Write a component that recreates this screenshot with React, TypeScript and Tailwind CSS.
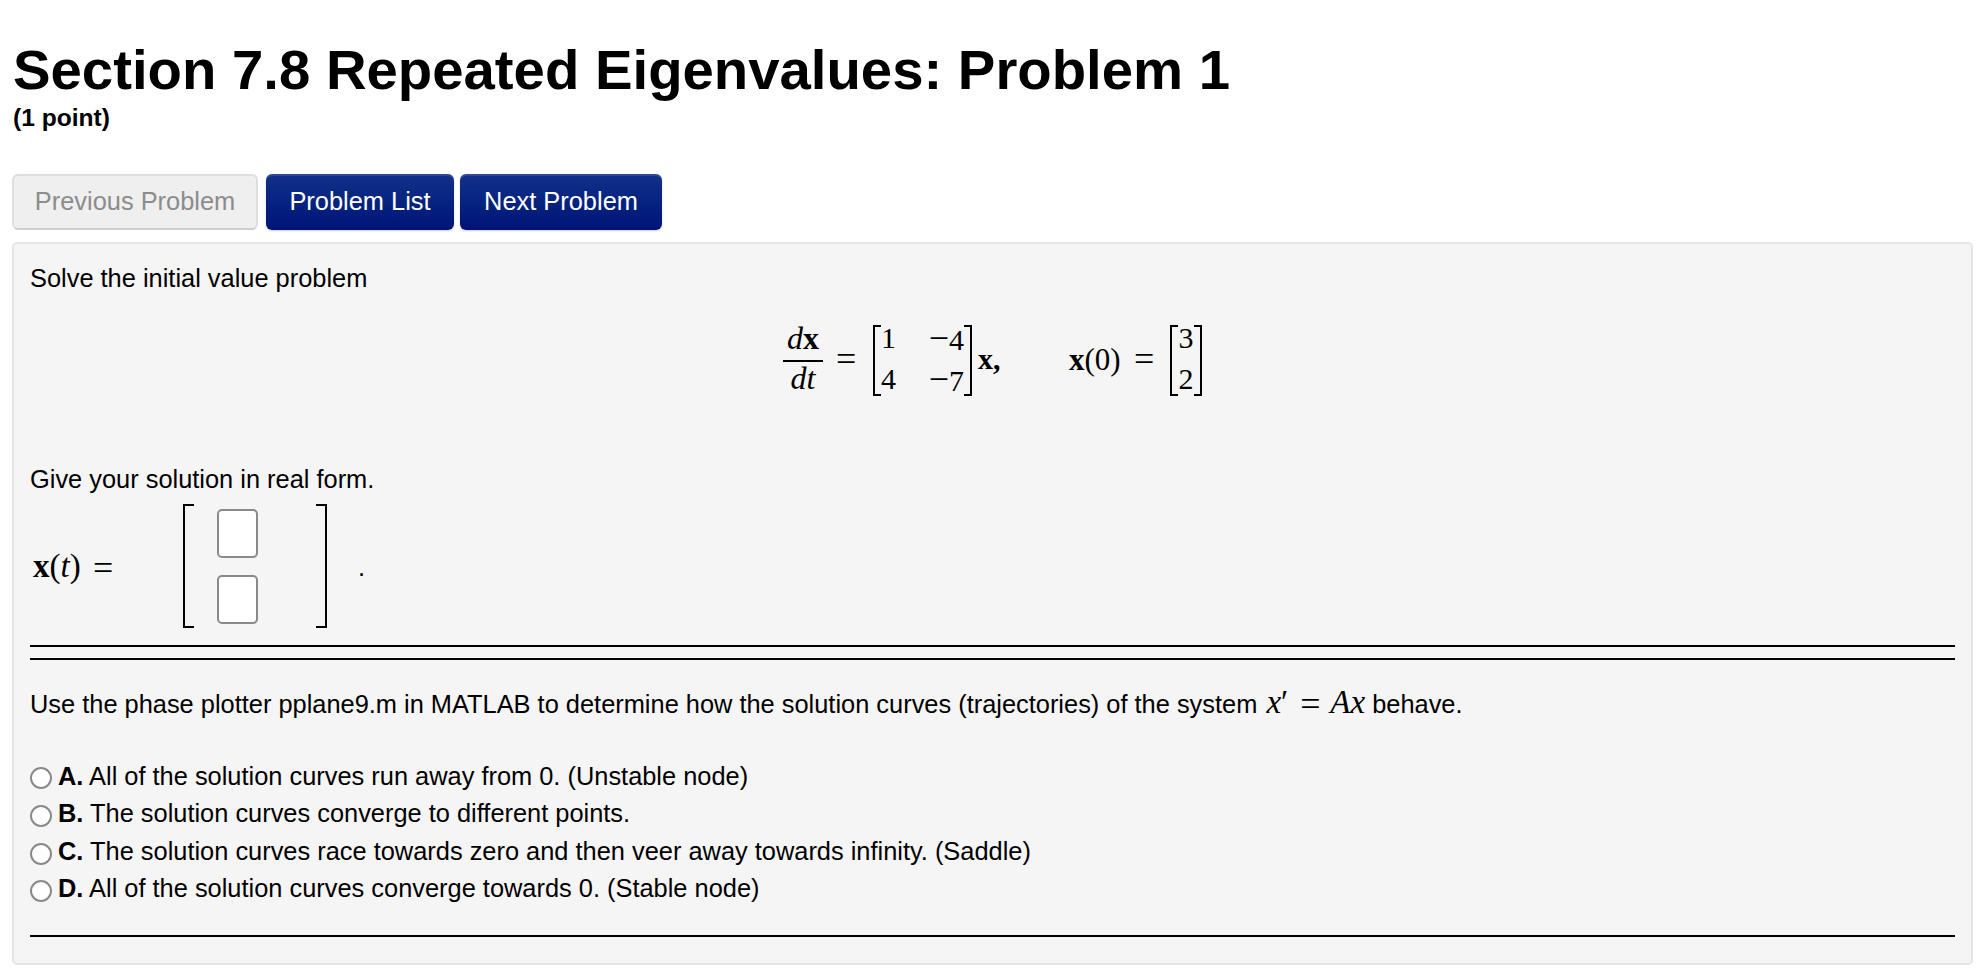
const options = [
  { key: 'A.', text: 'All of the solution curves run away from 0. (Unstable node)', row: 'h-[36px]', radio: 'mt-[3px]' },
  { key: 'B.', text: 'The solution curves converge to different points.', row: 'h-[38px]', radio: 'mt-[5px]' },
  { key: 'C.', text: 'The solution curves race towards zero and then veer away towards infinity. (Saddle)', row: 'h-[38px]', radio: 'mt-[6px]' },
  { key: 'D.', text: 'All of the solution curves converge towards 0. (Stable node)', row: 'h-[36px]', radio: 'mt-[5px]' },
];

function Bracket({ side, className }: { side: 'left' | 'right'; className: string }) {
  return (
    <div
      className={`shrink-0 border-y-2 border-black ${side === 'left' ? 'border-l-2' : 'border-r-2'} ${className}`}
    />
  );
}

function Equals({ className }: { className: string }) {
  return <span className={`inline-block w-[20px] text-center text-[36px] leading-none ${className}`}>=</span>;
}

function Negative({ digit }: { digit: string }) {
  return (
    <span className="whitespace-nowrap text-right">
      <span className="text-[36px]">−</span>
      {digit}
    </span>
  );
}

function Equation() {
  return (
    <div className="mt-[29px] flex h-[71px] items-center justify-center font-['Liberation_Serif',serif] text-[30px] leading-none text-black">
      <div className="flex h-[71px] w-[40px] flex-col items-center text-[32px] leading-[26px]">
        <div className="h-[35px] whitespace-nowrap">
          <i>d</i>
          <b>x</b>
        </div>
        <div className="h-[2px] w-full shrink-0 bg-black" />
        <div className="mt-[3px] whitespace-nowrap">
          <i>dt</i>
        </div>
      </div>
      <Equals className="ml-[13px] pb-[4px]" />
      <Bracket side="left" className="ml-[17px] h-[71px] w-[8px]" />
      <div className="grid h-[71px] w-[83px] auto-rows-[41px] grid-cols-[44px_39px] leading-[26px]">
        <span>1</span>
        <Negative digit="4" />
        <span>4</span>
        <Negative digit="7" />
      </div>
      <Bracket side="right" className="h-[71px] w-[8px]" />
      <b className="ml-[6px] w-[25px] pb-[4px]">x,</b>
      <div className="ml-[66px] w-[52px] whitespace-nowrap pb-[3px] text-[31px]">
        <b>x</b>(0)
      </div>
      <Equals className="ml-[13px] pb-[4px]" />
      <Bracket side="left" className="ml-[16px] h-[71px] w-[8px]" />
      <div className="grid h-[71px] w-[16px] auto-rows-[41px] text-center leading-[26px]">
        <span>3</span>
        <span>2</span>
      </div>
      <Bracket side="right" className="h-[71px] w-[8px]" />
    </div>
  );
}

function AnswerBox() {
  return (
    <input
      type="text"
      className="block h-[49px] w-[41px] rounded-[5px] border-2 border-[#8a8a8a] bg-white outline-none"
    />
  );
}

function Answer() {
  return (
    <div className="mt-[7px] flex h-[124px] items-center">
      <div className="ml-[3px] flex w-[150px] items-center whitespace-nowrap font-['Liberation_Serif',serif] text-[33px] leading-none">
        <span className="w-[60px]">
          <b>x</b>(<i>t</i>)
        </span>
        <Equals className="mt-[4px]" />
      </div>
      <Bracket side="left" className="h-[124px] w-[11px]" />
      <div className="flex w-[122px] flex-col items-start gap-[17px] pl-[23px]">
        <AnswerBox />
        <AnswerBox />
      </div>
      <Bracket side="right" className="h-[124px] w-[11px]" />
      <span className="ml-[31px] mt-[1px]">.</span>
    </div>
  );
}

export default function App() {
  return (
    <div className="min-h-screen bg-white px-[12px] font-['Liberation_Sans',Arial,sans-serif] text-black">
      <h1 className="h-[104px] pt-[37px] pl-[1px] text-[56.3px] font-bold leading-[66px] whitespace-nowrap">
        Section 7.8 Repeated Eigenvalues: Problem 1
      </h1>
      <div className="h-[28px] pl-[1px] text-[24.6px] font-bold leading-[28px]">(1 point)</div>

      <div className="mt-[42px] flex h-[56px] text-[25.4px] leading-none">
        <button className="w-[246px] rounded-[6px] border-2 border-[#dedede] border-b-[#cfcfcf] bg-[#efefef] text-[#8c8c8c]">
          Previous Problem
        </button>
        <button className="ml-[8px] w-[188px] rounded-[6px] bg-gradient-to-b from-[#123189] to-[#001277] text-white shadow-[inset_0_2px_0_rgba(255,255,255,0.12),0_1px_2px_rgba(0,0,0,0.2)]">
          Problem List
        </button>
        <button className="ml-[6px] w-[202px] rounded-[6px] bg-gradient-to-b from-[#123189] to-[#001277] text-white shadow-[inset_0_2px_0_rgba(255,255,255,0.12),0_1px_2px_rgba(0,0,0,0.2)]">
          Next Problem
        </button>
      </div>

      <div className="mt-[12px] h-[723px] w-[1961px] rounded-[5px] border-2 border-[#e5e5e5] bg-[#f5f5f5] pt-[16px] pl-[16px] pr-[16px] text-[25.4px] leading-[36px]">
        <p>Solve the initial value problem</p>
        <Equation />
        <p className="mt-[65px]">Give your solution in real form.</p>
        <Answer />
        <div className="mt-[17px] h-[2px] bg-black" />
        <div className="mt-[11px] h-[2px] bg-black" />
        <p className="mt-[24px] h-[36px] whitespace-nowrap">
          Use the phase plotter pplane9.m in MATLAB to determine how the solution curves (trajectories) of the system{' '}
          <span className="ml-[2px] font-['Liberation_Serif',serif] text-[33px]">
            <i>x</i>′<Equals className="ml-[12px] mr-[10px] align-[-3px]" />
            <i>Ax</i>
          </span>{' '}
          behave.
        </p>
        <div className="mt-[38px]">
          {options.map((o) => (
            <label key={o.key} className={`flex items-center whitespace-nowrap ${o.row}`}>
              <input
                type="radio"
                name="answer"
                className={`h-[22px] w-[22px] shrink-0 appearance-none rounded-full border-2 border-[#8a8a8a] bg-white ${o.radio}`}
              />
              <span className="ml-[6px]">
                <b>{o.key}</b> {o.text}
              </span>
            </label>
          ))}
        </div>
        <div className="mt-[29px] h-[2px] bg-black" />
      </div>
    </div>
  );
}
